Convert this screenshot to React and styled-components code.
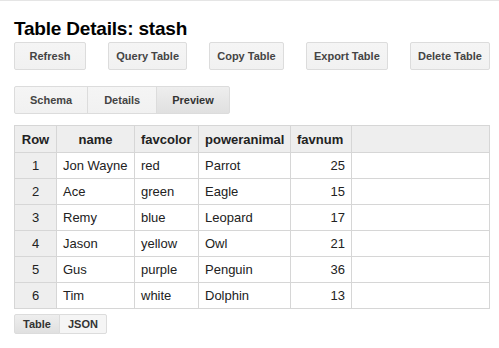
import React from "react";
import styled, { createGlobalStyle } from "styled-components";

const GlobalStyle = createGlobalStyle`
  body {
    margin: 0;
    background: #fff;
    font-family: "Liberation Sans", Arial, sans-serif;
    color: #222;
  }
`;

const Page = styled.div`
  width: 476px;
  border-top: 1px solid #e5e5e5;
  padding: 16px 9px 0 14px;
`;

const Title = styled.h2`
  margin: 0 0 2px;
  font-size: 19px;
  line-height: 23px;
  letter-spacing: -0.2px;
  font-weight: bold;
  color: #000;
`;

const Toolbar = styled.div`
  display: flex;
  justify-content: space-between;
`;

const Button = styled.button`
  box-sizing: border-box;
  height: 28px;
  min-width: 72px;
  padding: 0 7px;
  border: 1px solid #dcdcdc;
  border-radius: 2px;
  background: linear-gradient(#f5f5f5, #f1f1f1);
  color: #444;
  font-family: inherit;
  font-size: 11px;
  font-weight: bold;
`;

const Tabs = styled.div`
  display: flex;
  margin-top: 16px;
`;

const Tab = styled.button`
  box-sizing: border-box;
  height: 28px;
  min-width: 70px;
  padding: 0 15px;
  margin-left: -1px;
  border: 1px solid #dcdcdc;
  background: ${(p) => (p.$active ? "linear-gradient(#eeeeee, #e0e0e0)" : "linear-gradient(#f5f5f5, #f1f1f1)")};
  color: ${(p) => (p.$active ? "#333" : "#444")};
  font-family: inherit;
  font-size: 11px;
  font-weight: bold;
  &:first-child {
    margin-left: 0;
    border-radius: 2px 0 0 2px;
  }
  &:last-child {
    border-radius: 0 2px 2px 0;
  }
`;

const Grid = styled.table`
  margin-top: 11px;
  width: 476px;
  border-collapse: collapse;
  table-layout: fixed;
  font-size: 13px;
`;

const Col = styled.col`
  width: ${(p) => p.$w}px;
`;

const Head = styled.th`
  height: 26px;
  padding: 0 6px;
  border: 1px solid #d6d6d6;
  background: #eeeeee;
  color: #222;
  font-weight: bold;
  text-align: ${(p) => (p.$center ? "center" : "left")};
  white-space: nowrap;
`;

const Cell = styled.td`
  height: 25px;
  padding: 0 6px;
  border: 1px solid #d6d6d6;
  background: ${(p) => (p.$shade ? "#eeeeee" : "#fff")};
  text-align: ${(p) => p.$align || "left"};
  white-space: nowrap;
`;

const Switch = styled.div`
  display: flex;
  margin-top: 5px;
`;

const SwitchBtn = styled.button`
  box-sizing: border-box;
  height: 20px;
  padding: 0 8px;
  margin-left: -1px;
  border: 1px solid #dcdcdc;
  background: ${(p) => (p.$active ? "linear-gradient(#eeeeee, #e0e0e0)" : "#f5f5f5")};
  color: #333;
  font-family: inherit;
  font-size: 11px;
  font-weight: bold;
  &:first-child {
    margin-left: 0;
    border-radius: 2px 0 0 2px;
  }
  &:last-child {
    border-radius: 0 2px 2px 0;
  }
`;

const rows = [
  ["Jon Wayne", "red", "Parrot", 25],
  ["Ace", "green", "Eagle", 15],
  ["Remy", "blue", "Leopard", 17],
  ["Jason", "yellow", "Owl", 21],
  ["Gus", "purple", "Penguin", 36],
  ["Tim", "white", "Dolphin", 13],
];

export default function App() {
  return (
    <>
      <GlobalStyle />
      <Page>
        <Title>Table Details: stash</Title>
        <Toolbar>
          <Button>Refresh</Button>
          <Button>Query Table</Button>
          <Button>Copy Table</Button>
          <Button>Export Table</Button>
          <Button>Delete Table</Button>
        </Toolbar>
        <Tabs>
          <Tab>Schema</Tab>
          <Tab>Details</Tab>
          <Tab $active>Preview</Tab>
        </Tabs>
        <Grid>
          <colgroup>
            <Col $w={42} />
            <Col $w={78} />
            <Col $w={64} />
            <Col $w={92} />
            <Col $w={61} />
            <col />
          </colgroup>
          <thead>
            <tr>
              <Head $center>Row</Head>
              <Head $center>name</Head>
              <Head>favcolor</Head>
              <Head>poweranimal</Head>
              <Head>favnum</Head>
              <Head />
            </tr>
          </thead>
          <tbody>
            {rows.map((r, i) => (
              <tr key={i}>
                <Cell $shade $align="center">{i + 1}</Cell>
                <Cell>{r[0]}</Cell>
                <Cell>{r[1]}</Cell>
                <Cell>{r[2]}</Cell>
                <Cell $align="right">{r[3]}</Cell>
                <Cell />
              </tr>
            ))}
          </tbody>
        </Grid>
        <Switch>
          <SwitchBtn $active>Table</SwitchBtn>
          <SwitchBtn>JSON</SwitchBtn>
        </Switch>
      </Page>
    </>
  );
}
